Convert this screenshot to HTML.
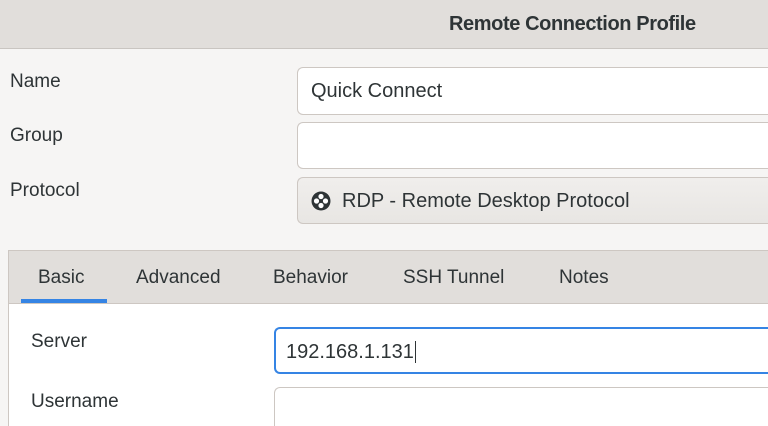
<!DOCTYPE html>
<html><head><meta charset="utf-8"><style>
*{margin:0;padding:0;box-sizing:border-box}
html,body{width:768px;height:426px;overflow:hidden}
body{background:#f6f5f4;font-family:"Liberation Sans",sans-serif;color:#2e3436;position:relative}
.hdr{position:absolute;left:0;top:0;width:768px;height:49px;background:#e1dedb;border-bottom:1px solid #c9c5c1}
.title{position:absolute;left:449px;top:13px;font-size:20px;font-weight:bold;color:#2e3436;letter-spacing:-0.4px}
.lbl{position:absolute;font-size:19px;color:#2e3436}
.entry{position:absolute;background:#fff;border:1px solid #cdc7c2;border-radius:6px;width:494px}
.entry span{position:absolute;left:13px;top:12px;font-size:20px}
.btn{position:absolute;left:297px;top:177px;width:471px;height:47px;background:linear-gradient(#f0eeec,#e8e6e3);border:1px solid #cdc7c2;border-right:none;border-radius:6px 0 0 6px}
.nb{position:absolute;left:8px;top:250px;width:760px;height:176px;background:#fff;border:1px solid #cdc7c2;border-right:none;border-bottom:none}
.tabs{position:absolute;left:0;top:0;width:100%;height:53px;background:#e1dedb;border-bottom:1px solid #cdc7c2}
.tab{position:absolute;top:16px;font-size:19px;color:#2e3436}
.ul{position:absolute;left:12px;top:48px;width:86px;height:4px;background:#3584e4}
</style></head><body>
<div class="hdr"><div class="title">Remote Connection Profile</div></div>
<div class="lbl" style="left:10px;top:71px">Name</div>
<div class="lbl" style="left:10px;top:125px">Group</div>
<div class="lbl" style="left:10px;top:180px">Protocol</div>
<div class="entry" style="left:297px;top:67px;height:48px;width:471px;border-right:none;border-radius:6px 0 0 6px"><span>Quick Connect</span></div>
<div class="entry" style="left:297px;top:122px;height:47px;width:471px;border-right:none;border-radius:6px 0 0 6px"></div>
<div class="btn">
<svg style="position:absolute;left:13px;top:13px" width="20" height="20" viewBox="0 0 20 20"><circle cx="10" cy="10" r="9.5" fill="#2e3436"/><circle cx="10" cy="5.5" r="2.6" fill="#fff"/><circle cx="10" cy="14.5" r="2.6" fill="#fff"/><circle cx="5.5" cy="10" r="2.6" fill="#fff"/><circle cx="14.5" cy="10" r="2.6" fill="#fff"/></svg>
<span style="position:absolute;left:44px;top:12px;font-size:20px">RDP - Remote Desktop Protocol</span></div>
<div class="nb">
<div class="tabs">
<div class="tab" style="left:29px">Basic</div>
<div class="tab" style="left:127px">Advanced</div>
<div class="tab" style="left:264px">Behavior</div>
<div class="tab" style="left:394px">SSH Tunnel</div>
<div class="tab" style="left:550px">Notes</div>
<div class="ul"></div>
</div>
<div class="lbl" style="left:22px;top:80px">Server</div>
<div class="lbl" style="left:22px;top:140px">Username</div>
</div>
<div class="entry" style="left:274px;top:327px;height:47px;width:494px;border:2px solid #3584e4;border-right:none;border-radius:6px 0 0 6px"><span style="left:10px;top:12px">192.168.1.131<span style="position:static;border-left:1px solid #2e3436;margin-left:1px"></span></span></div>
<div class="entry" style="left:274px;top:387px;height:39px;width:494px;border-right:none;border-bottom:none;border-radius:6px 0 0 0"></div>
</body></html>
